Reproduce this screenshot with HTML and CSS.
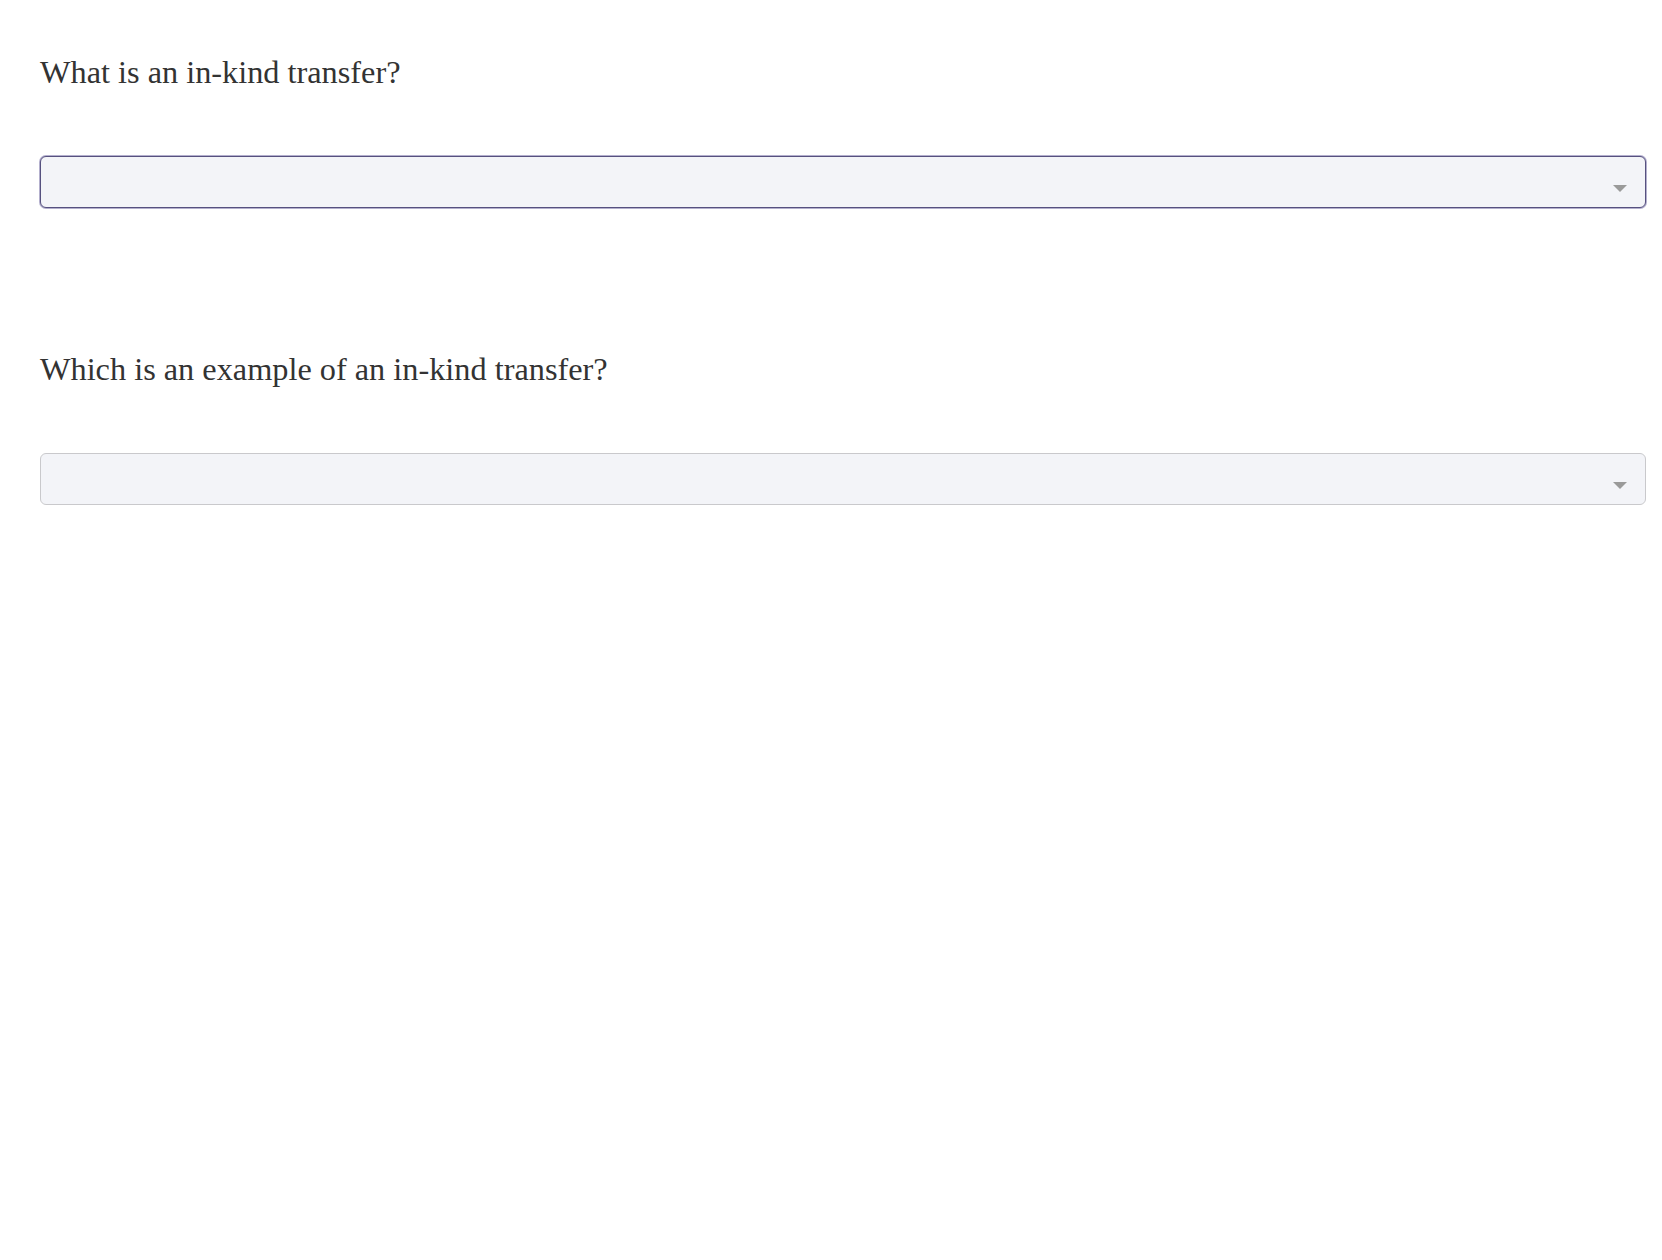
FILE: index.html
```html
<!DOCTYPE html>
<html lang="en">
<head>
    <meta charset="UTF-8">
    <meta name="viewport" content="width=device-width, initial-scale=1.0">
    <title>Quiz</title>
    <link rel="stylesheet" href="styles.css">
</head>
<body>
    <div class="quiz">
        <div class="question">
            <div class="question-text">What is an in-kind transfer?</div>
            <div class="dropdown focused">
                <span class="caret"></span>
            </div>
        </div>

        <div class="question">
            <div class="question-text">Which is an example of an in-kind transfer?</div>
            <div class="dropdown">
                <span class="caret"></span>
            </div>
        </div>
    </div>
</body>
</html>
```

FILE: styles.css
```css
body {
    margin: 0;
    padding: 0;
    background-color: #ffffff;
    font-family: "Liberation Serif", "Times New Roman", serif;
    color: #333333;
}
.quiz {
    display: flex;
    flex-direction: column;
    gap: 143px;
    padding: 54px 16px 0 40px;
}
.question-text {
    font-size: 32.3px;
    line-height: 37px;
    margin-bottom: 65px;
}
.dropdown {
    box-sizing: border-box;
    height: 52px;
    display: flex;
    justify-content: flex-end;
    align-items: center;
    padding-right: 18px;
    background-color: #f3f4f8;
    border: 1px solid #c9c9cc;
    border-radius: 6px;
}
.dropdown.focused {
    border: 1.5px solid #56517f;
    box-shadow: 0 0 0 1px #b3afcd;
}
.caret {
    width: 0;
    height: 0;
    margin-top: 12px;
    border-left: 7px solid transparent;
    border-right: 7px solid transparent;
    border-top: 7px solid #9a9a9a;
}
```
